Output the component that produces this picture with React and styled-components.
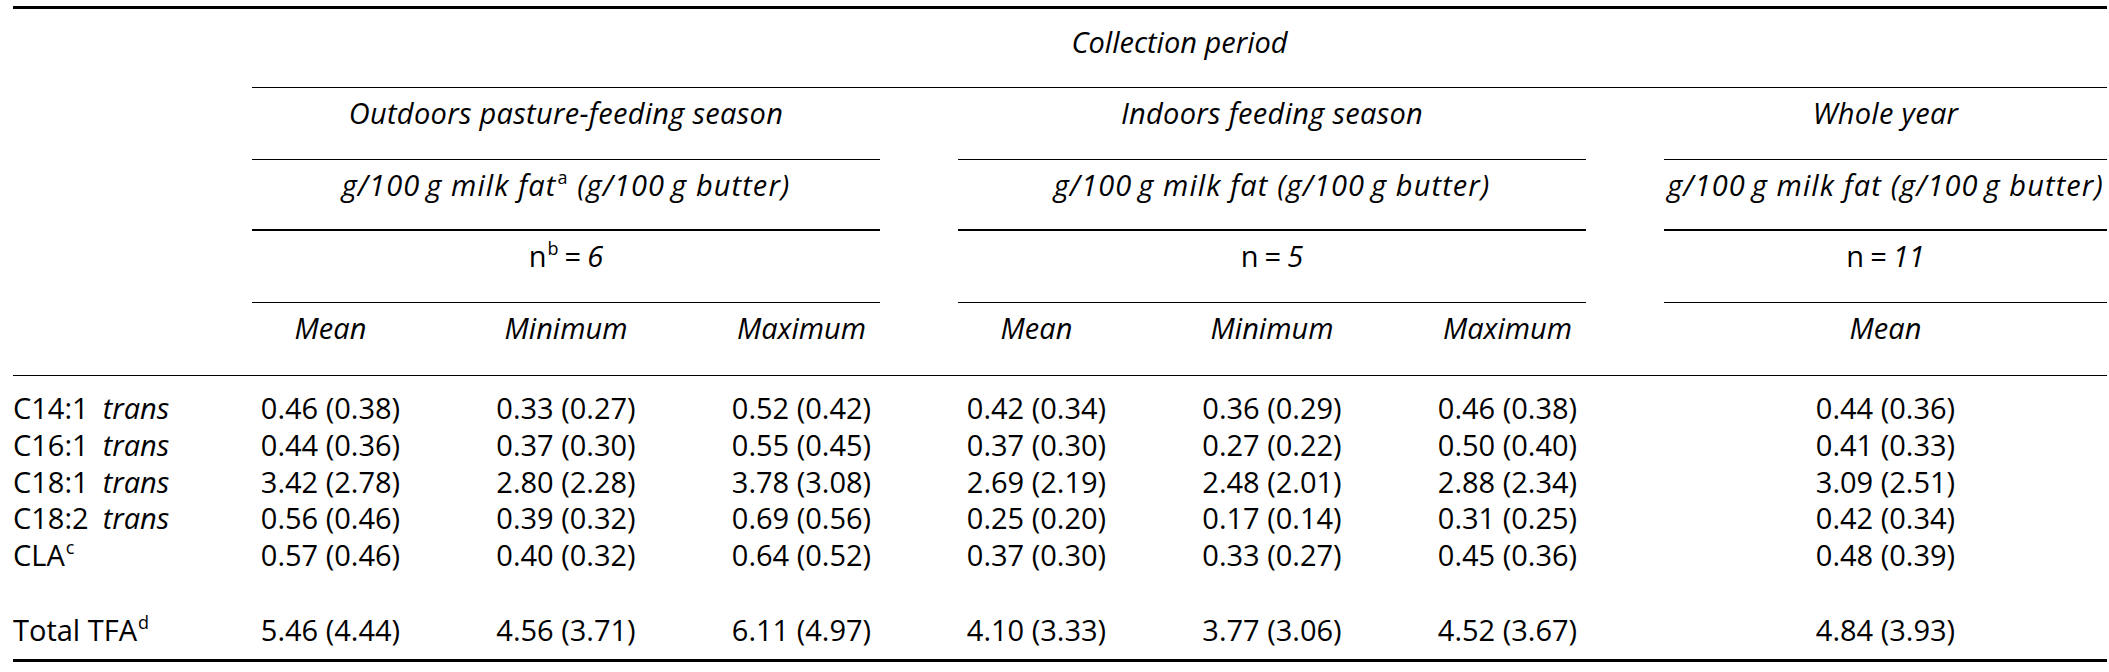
import styled, { createGlobalStyle } from "styled-components";

const GlobalStyle = createGlobalStyle`
  html, body {
    margin: 0;
    padding: 0;
    background: #fff;
  }
  body {
    font-family: "Open Sans", "DejaVu Sans", sans-serif;
    color: #000;
  }
`;

const groups = [
  {
    title: "Outdoors pasture-feeding season",
    unitNote: "a",
    nNote: "b",
    n: "6",
    cols: ["Mean", "Minimum", "Maximum"],
    width: 628,
  },
  {
    title: "Indoors feeding season",
    n: "5",
    cols: ["Mean", "Minimum", "Maximum"],
    width: 628,
  },
  {
    title: "Whole year",
    n: "11",
    cols: ["Mean"],
    width: 443,
  },
];

const rows = [
  { name: "C14:1", trans: true, values: ["0.46 (0.38)", "0.33 (0.27)", "0.52 (0.42)", "0.42 (0.34)", "0.36 (0.29)", "0.46 (0.38)", "0.44 (0.36)"] },
  { name: "C16:1", trans: true, values: ["0.44 (0.36)", "0.37 (0.30)", "0.55 (0.45)", "0.37 (0.30)", "0.27 (0.22)", "0.50 (0.40)", "0.41 (0.33)"] },
  { name: "C18:1", trans: true, values: ["3.42 (2.78)", "2.80 (2.28)", "3.78 (3.08)", "2.69 (2.19)", "2.48 (2.01)", "2.88 (2.34)", "3.09 (2.51)"] },
  { name: "C18:2", trans: true, values: ["0.56 (0.46)", "0.39 (0.32)", "0.69 (0.56)", "0.25 (0.20)", "0.17 (0.14)", "0.31 (0.25)", "0.42 (0.34)"] },
  { name: "CLA", note: "c", values: ["0.57 (0.46)", "0.40 (0.32)", "0.64 (0.52)", "0.37 (0.30)", "0.33 (0.27)", "0.45 (0.36)", "0.48 (0.39)"] },
];

const total = { name: "Total TFA", note: "d", values: ["5.46 (4.44)", "4.56 (3.71)", "6.11 (4.97)", "4.10 (3.33)", "3.77 (3.06)", "4.52 (3.67)", "4.84 (3.93)"] };

function Unit({ note }) {
  return (
    <UnitText>
      g/100{"\u2009"}g milk fat{note && <Sup>{note}</Sup>} (g/100{"\u2009"}g butter)
    </UnitText>
  );
}

function ValueCells({ values }) {
  let i = 0;
  return (
    <Groups>
      {groups.map((g) => (
        <GroupCells key={g.title} $width={g.width} $single={g.cols.length === 1}>
          {g.cols.map(() => {
            const v = values[i++];
            return <Cell key={i}>{v}</Cell>;
          })}
        </GroupCells>
      ))}
    </Groups>
  );
}

function RowLabel({ row }) {
  return (
    <Label>
      {row.name}
      {row.trans && <Trans>trans</Trans>}
      {row.note && <Sup>{row.note}</Sup>}
    </Label>
  );
}

export default function App() {
  return (
    <>
      <GlobalStyle />
      <Table>
        <Head>
          <Stub />
          <HeadMain>
            <SpanRow>
              <Ital>Collection period</Ital>
            </SpanRow>
            <Groups>
              {groups.map((g) => (
                <Group key={g.title} $width={g.width}>
                  <GroupRow>
                    <Title>{g.title}</Title>
                  </GroupRow>
                  <GroupRow $thick>
                    <Unit note={g.unitNote} />
                  </GroupRow>
                  <GroupRow>
                    <span>
                      n{g.nNote && <Sup>{g.nNote}</Sup>}
                      <Eq>=</Eq>
                      <Ital>{g.n}</Ital>
                    </span>
                  </GroupRow>
                  <SubRow $single={g.cols.length === 1}>
                    {g.cols.map((c) => (
                      <Cell key={c}>
                        <Ital>{c}</Ital>
                      </Cell>
                    ))}
                  </SubRow>
                </Group>
              ))}
            </Groups>
          </HeadMain>
        </Head>
        <Body>
          {rows.map((r) => (
            <DataRow key={r.name}>
              <RowLabel row={r} />
              <ValueCells values={r.values} />
            </DataRow>
          ))}
          <DataRow $gap>
            <RowLabel row={total} />
            <ValueCells values={total.values} />
          </DataRow>
        </Body>
      </Table>
    </>
  );
}

const Table = styled.div`
  width: 2094px;
  margin: 6px 0 0 13px;
  border-top: 3px solid #000;
  border-bottom: 3px solid #000;
  font-size: 29px;
  line-height: 40px;
`;

const Head = styled.div`
  display: flex;
  border-bottom: 1px solid #000;
`;

const Stub = styled.div`
  width: 239px;
  flex: none;
`;

const HeadMain = styled.div`
  flex: 1;
  display: flex;
  flex-direction: column;
`;

const SpanRow = styled.div`
  height: 79px;
  box-sizing: border-box;
  padding-top: 13px;
  text-align: center;
  border-bottom: 1px solid #000;
`;

const Groups = styled.div`
  flex: 1;
  display: flex;
  justify-content: space-between;
`;

const Group = styled.div`
  width: ${(p) => p.$width}px;
  display: flex;
  flex-direction: column;
`;

const GroupRow = styled.div`
  height: ${(p) => (p.$thick ? 71 : 72)}px;
  box-sizing: border-box;
  padding-top: 5px;
  text-align: center;
  white-space: nowrap;
  border-bottom: ${(p) => (p.$thick ? 2 : 1)}px solid #000;
`;

const SubRow = styled.div`
  height: 72px;
  box-sizing: border-box;
  padding-top: 5px;
  display: flex;
  justify-content: ${(p) => (p.$single ? "center" : "space-between")};
`;

const Cell = styled.div`
  width: 157px;
  text-align: center;
  white-space: nowrap;
`;

const Ital = styled.span`
  font-style: italic;
`;

const Title = styled.span`
  font-style: italic;
  letter-spacing: 0.3px;
`;

const UnitText = styled.span`
  font-style: italic;
  letter-spacing: 1.1px;
`;

const Sup = styled.sup`
  font-size: 18px;
  line-height: 0;
  font-style: normal;
  vertical-align: 0;
  position: relative;
  top: -12px;
  margin-left: 1px;
`;

const Eq = styled.span`
  margin: 0 6px;
`;

const Body = styled.div`
  padding: 14px 0 10px;
  line-height: 36.8px;
`;

const DataRow = styled.div`
  display: flex;
  margin-top: ${(p) => (p.$gap ? 38 : 0)}px;
`;

const Label = styled.div`
  width: 239px;
  flex: none;
  white-space: nowrap;
`;

const Trans = styled.span`
  font-style: italic;
  margin-left: 14px;
`;

const GroupCells = styled.div`
  width: ${(p) => p.$width}px;
  display: flex;
  justify-content: ${(p) => (p.$single ? "center" : "space-between")};
`;
